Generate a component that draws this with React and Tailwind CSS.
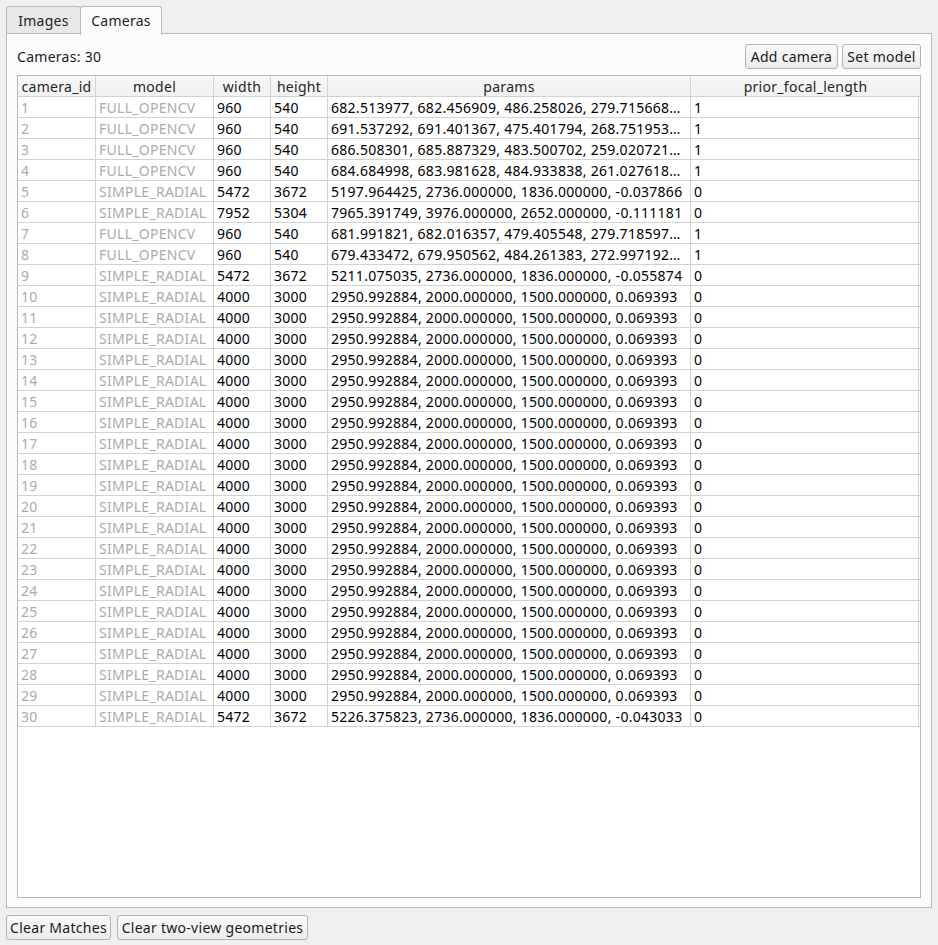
import React from 'react';

const FONT = { fontFamily: '"Noto Sans", "DejaVu Sans", sans-serif' };

const full = (id, p) => ({ id, model: 'FULL_OPENCV', w: 960, h: 540, params: p, prior: 1 });
const simple = (id, w, h, p) => ({ id, model: 'SIMPLE_RADIAL', w, h, params: p, prior: 0 });

const cameras = [
    full(1, '682.513977, 682.456909, 486.258026, 279.715668…'),
    full(2, '691.537292, 691.401367, 475.401794, 268.751953…'),
    full(3, '686.508301, 685.887329, 483.500702, 259.020721…'),
    full(4, '684.684998, 683.981628, 484.933838, 261.027618…'),
    simple(5, 5472, 3672, '5197.964425, 2736.000000, 1836.000000, -0.037866'),
    simple(6, 7952, 5304, '7965.391749, 3976.000000, 2652.000000, -0.111181'),
    full(7, '681.991821, 682.016357, 479.405548, 279.718597…'),
    full(8, '679.433472, 679.950562, 484.261383, 272.997192…'),
    simple(9, 5472, 3672, '5211.075035, 2736.000000, 1836.000000, -0.055874'),
];
for (let i = 10; i <= 29; i++) {
    cameras.push(simple(i, 4000, 3000, '2950.992884, 2000.000000, 1500.000000, 0.069393'));
}
cameras.push(simple(30, 5472, 3672, '5226.375823, 2736.000000, 1836.000000, -0.043033'));

const Button = ({ children, className = '' }) => (
    <button className={`h-[25px] px-[3px] border border-[#b3b3b3] rounded-[3px] bg-gradient-to-b from-[#fafafa] to-[#ececec] text-[14px] text-[#1a1a1a] leading-none whitespace-nowrap ${className}`}>
        {children}
    </button>
);

const HeadCell = ({ children, className }) => (
    <div className={`h-[20px] flex items-center justify-center border-r border-[#d4d4d4] text-[#262626] ${className}`}>
        {children}
    </div>
);

const Cell = ({ children, className, dim }) => (
    <div className={`h-[20px] flex items-center px-[3px] border-r border-[#d2d2d2] whitespace-nowrap overflow-hidden ${dim ? 'text-[#ababab]' : 'text-black'} ${className}`}>
        {children}
    </div>
);

const App = () => {
    return (
        <div className="w-[938px] h-[945px] bg-[#efefef] flex flex-col text-[14px] tracking-[0.28px]" style={FONT}>
            {/* tabs */}
            <div className="flex items-end h-[34px] pl-[6px] relative z-10">
                <div className="w-[75px] h-[27px] border border-[#bababa] border-b-0 rounded-t-[3px] bg-[#e8e8e8] flex items-center justify-center text-[#222] mb-[1px]">
                    Images
                </div>
                <div className="w-[82px] h-[29px] -ml-[1px] pb-[2px] border border-[#bababa] border-b-0 rounded-t-[3px] bg-[#fcfcfc] flex items-center justify-center text-[#222] -mb-[1px]">
                    Cameras
                </div>
            </div>

            {/* panel */}
            <div className="mx-[6px] -mt-[1px] h-[875px] border border-[#bababa] bg-[#fcfcfc] flex flex-col px-[10px] pt-[10px] pb-[9px]">
                <div className="flex items-center justify-between h-[25px]">
                    <span className="text-[#1a1a1a]">Cameras: 30</span>
                    <div className="flex gap-[4px]">
                        <Button className="w-[93px]">Add camera</Button>
                        <Button className="w-[79px]">Set model</Button>
                    </div>
                </div>

                <div className="mt-[6px] flex-1 border border-[#b7b7b7] bg-white flex flex-col overflow-hidden">
                    <div className="flex bg-gradient-to-b from-[#f7f7f7] to-[#f1f1f1] border-b border-[#d2d2d2]">
                        <HeadCell className="w-[78px]">camera_id</HeadCell>
                        <HeadCell className="w-[118px]">model</HeadCell>
                        <HeadCell className="w-[57px]">width</HeadCell>
                        <HeadCell className="w-[57px]">height</HeadCell>
                        <HeadCell className="w-[363px]">params</HeadCell>
                        <HeadCell className="flex-1 border-r-0">prior_focal_length</HeadCell>
                    </div>
                    {cameras.map(c => (
                        <div key={c.id} className="flex border-b border-[#d2d2d2]">
                            <Cell className="w-[78px]" dim>{c.id}</Cell>
                            <Cell className="w-[118px]" dim>{c.model}</Cell>
                            <Cell className="w-[57px]">{c.w}</Cell>
                            <Cell className="w-[57px]">{c.h}</Cell>
                            <Cell className="w-[363px]">{c.params}</Cell>
                            <Cell className="flex-1 mr-[1px]">{c.prior}</Cell>
                        </div>
                    ))}
                </div>
            </div>

            {/* bottom buttons */}
            <div className="flex gap-[6px] pl-[6px] pt-[7px]">
                <Button className="w-[105px]">Clear Matches</Button>
                <Button className="w-[191px]">Clear two-view geometries</Button>
            </div>
        </div>
    );
};

export default App;
